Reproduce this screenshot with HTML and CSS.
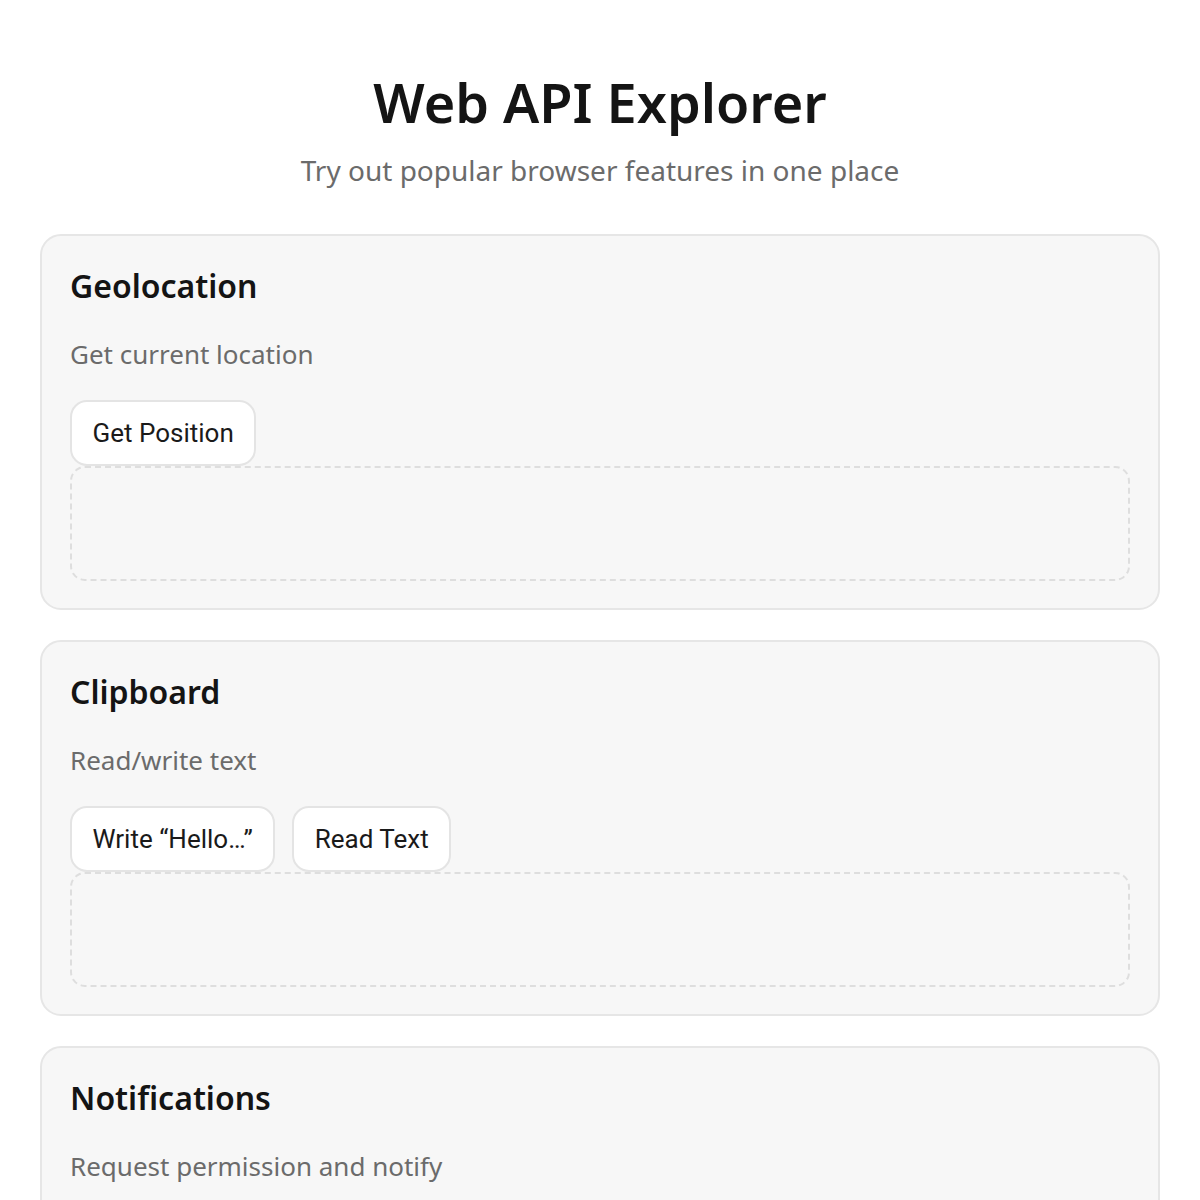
FILE: index.html
```html
<!DOCTYPE html>
<html lang="en">
<head>
<meta charset="utf-8">
<title>Web API Explorer</title>
<link rel="stylesheet" href="styles.css">
</head>
<body>
<main class="page">
  <header class="header">
    <h1 class="title">Web API Explorer</h1>
    <p class="subtitle">Try out popular browser features in one place</p>
  </header>
  <section class="cards">
    <article class="card">
      <h2 class="card-title">Geolocation</h2>
      <p class="card-desc">Get current location</p>
      <div class="actions">
        <button class="btn" type="button">Get Position</button>
      </div>
      <div class="output"></div>
    </article>
    <article class="card">
      <h2 class="card-title">Clipboard</h2>
      <p class="card-desc">Read/write text</p>
      <div class="actions">
        <button class="btn" type="button">Write “Hello…”</button>
        <button class="btn" type="button">Read Text</button>
      </div>
      <div class="output"></div>
    </article>
    <article class="card">
      <h2 class="card-title">Notifications</h2>
      <p class="card-desc">Request permission and notify</p>
      <div class="actions">
        <button class="btn" type="button">Notify</button>
      </div>
      <div class="output"></div>
    </article>
  </section>
</main>
</body>
</html>
```
FILE: styles.css
```css
* { box-sizing: border-box; }
html, body { margin: 0; padding: 0; background: #ffffff; }
body {
  font-family: "Noto Sans", "Open Sans", sans-serif;
  color: #111111;
}
.page {
  padding: 70px 40px 40px;
}
.header {
  text-align: center;
  margin-bottom: 44px;
}
.title {
  margin: 0 0 16px;
  font-size: 54px;
  font-weight: 600;
  line-height: 1.2;
  color: #141414;
}
.subtitle {
  margin: 0;
  font-size: 28px;
  line-height: 39px;
  color: #6b6b6b;
}
.cards {
  display: flex;
  flex-direction: column;
  gap: 30px;
}
.card {
  background: #f7f7f7;
  border: 2px solid #e6e6e6;
  border-radius: 21px;
  padding: 30px 28px 27px;
}
.card-title {
  margin: 0 0 29px;
  font-size: 32px;
  font-weight: 600;
  line-height: 1.25;
  color: #141414;
}
.card-desc {
  margin: 0 0 26px;
  font-size: 26px;
  line-height: 1.5;
  color: #6b6b6b;
}
.actions {
  display: flex;
  gap: 17px;
}
.btn {
  font-family: Roboto, "Liberation Sans", sans-serif;
  font-size: 26px;
  line-height: normal;
  color: #1a1a1a;
  background: #ffffff;
  border: 2px solid #e4e4e4;
  border-radius: 17px;
  padding: 16px 20.5px;
}
.output {
  height: 115px;
  border: 2px dashed #dedede;
  border-radius: 15px;
  background: #f7f7f7;
}
```
